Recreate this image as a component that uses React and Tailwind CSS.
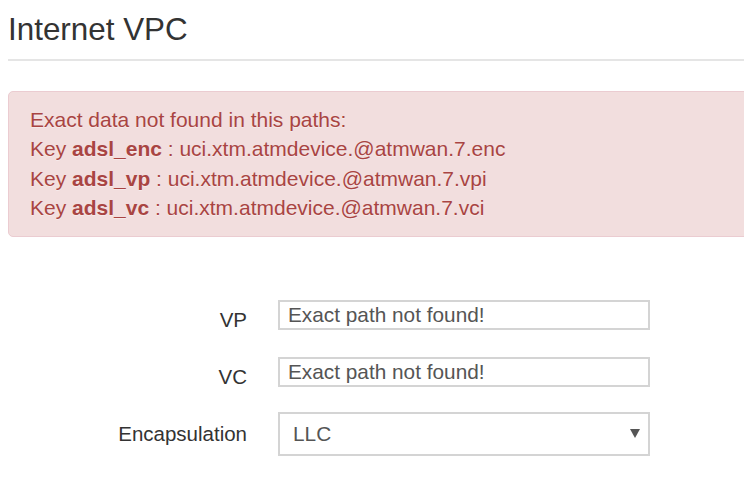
import React from "react";

const paths = [
  { key: "adsl_enc", path: "uci.xtm.atmdevice.@atmwan.7.enc" },
  { key: "adsl_vp", path: "uci.xtm.atmdevice.@atmwan.7.vpi" },
  { key: "adsl_vc", path: "uci.xtm.atmdevice.@atmwan.7.vci" },
];

const TextField = ({ label, value }) => (
  <div className="flex h-[30px]">
    <label className="w-[239px] shrink-0 pt-[5px] text-right text-[20.5px] leading-[29px] text-[#333]">
      {label}
    </label>
    <input
      readOnly
      value={value}
      className="ml-[31px] h-[30px] w-[372px] border-2 border-[#d4d4d4] bg-white pl-[8px] text-[20.8px] text-[#555] outline-none"
    />
  </div>
);

export default function App() {
  return (
    <div className="h-[496px] w-[744px] overflow-hidden bg-white font-['Liberation_Sans',Arial,sans-serif]">
      <div className="w-[790px] pl-[8px]">
        <h2 className="pt-[12px] text-[31.4px] font-normal leading-[35px] text-[#333]">Internet VPC</h2>
        <div className="mt-[12px] h-[2px] bg-[#e5e5e5]" />

        <div className="mt-[30px] rounded-[5px] border border-[#ebccd1] bg-[#f2dede] py-[13px] pl-[21px] text-[21px] leading-[29.4px] text-[#a94442] [text-shadow:0_1px_0_rgba(255,255,255,0.4)]">
          <div>Exact data not found in this paths:</div>
          {paths.map((p) => (
            <div key={p.key}>
              Key <b>{p.key}</b> : {p.path}
            </div>
          ))}
        </div>

        <div className="mt-[63px] flex flex-col">
          <TextField label="VP" value="Exact path not found!" />
          <div className="mt-[27px]">
            <TextField label="VC" value="Exact path not found!" />
          </div>
          <div className="mt-[25px] flex h-[44px] items-center">
            <label className="w-[239px] shrink-0 text-right text-[20.5px] leading-[29px] text-[#333]">
              Encapsulation
            </label>
            <div className="ml-[31px] flex h-[44px] w-[372px] items-center justify-between border-2 border-[#d4d4d4] bg-white pl-[13px] pr-[8px] text-[20.8px] text-[#555]">
              <span>LLC</span>
              <svg width="10" height="9" viewBox="0 0 10 9">
                <polygon points="0,0 10,0 5,9" fill="#555" />
              </svg>
            </div>
          </div>
        </div>
      </div>
    </div>
  );
}
